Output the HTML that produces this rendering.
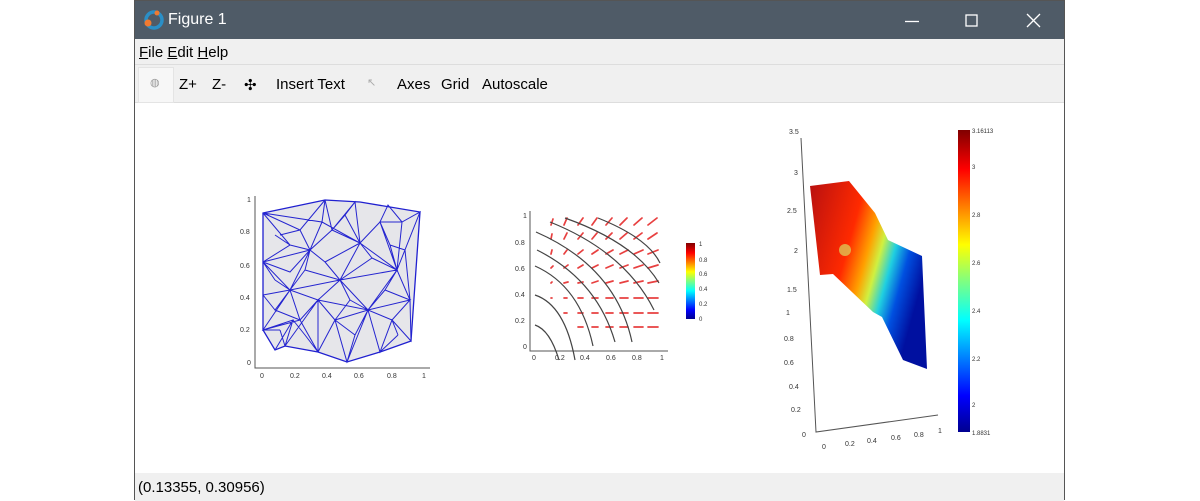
<!DOCTYPE html><html><head><style>
body{margin:0;width:1200px;height:500px;background:#fff;position:relative;overflow:hidden;font-family:"Liberation Sans",sans-serif}
.win{position:absolute;left:134px;top:0;width:931px;height:500px;border:1px solid #555;box-sizing:border-box}
.title{position:absolute;left:0;top:0;width:100%;height:38px;background:#4f5b67;color:#fff;font-size:16px}
.menu{position:absolute;top:38px;left:0;width:100%;height:25px;background:#f0f0f0;font-size:15px;color:#000}
.tool{position:absolute;top:63px;left:0;width:100%;height:39px;background:#f0f0f0;border-top:1px solid #ddd;border-bottom:1px solid #ddd;box-sizing:border-box;font-size:15px}
.status{position:absolute;top:472px;left:0;width:100%;height:28px;background:#f0f0f0;font-size:15px}
span.t{position:absolute;top:11px}
</style></head><body>
<div class="win">
<div class="title">
<svg style="position:absolute;left:8px;top:8px" width="22" height="22"><circle cx="11" cy="11" r="8" fill="none" stroke="#2a8fc7" stroke-width="3.5"/><circle cx="5" cy="14" r="3.5" fill="#f07a30"/><circle cx="14" cy="4" r="2.5" fill="#f07a30"/></svg>
<span style="position:absolute;left:33px;top:10px">Figure 1</span>
<svg style="position:absolute;left:760px;top:10px" width="150" height="20" stroke="#fff" stroke-width="1.3" fill="none"><path d="M10 10.5h14"/><rect x="71" y="4" width="11" height="11"/><path d="M132 3l13 13M145 3l-13 13"/></svg>
</div>
<div class="menu"><span style="position:absolute;left:4px;top:5px"><u>F</u>ile <u>E</u>dit <u>H</u>elp</span></div>
<div class="tool">
<div style="position:absolute;left:3px;top:2px;width:34px;height:34px;background:#f7f7f7;border:1px solid #e4e4e4"></div>
<span class="t" style="left:15px;color:#999;font-size:11px">◍</span>
<span class="t" style="left:44px">Z+</span><span class="t" style="left:77px">Z-</span>
<span class="t" style="left:109px">✣</span>
<span class="t" style="left:141px">Insert Text</span>
<span class="t" style="left:232px;color:#aaa;font-size:11px">↖</span>
<span class="t" style="left:262px">Axes</span><span class="t" style="left:306px">Grid</span><span class="t" style="left:347px">Autoscale</span>
</div>
<div class="status"><span style="position:absolute;left:3px;top:6px">(0.13355, 0.30956)</span></div>
</div>
<svg style="position:absolute;left:0;top:0" width="1200" height="500" font-family="Liberation Sans" font-size="7" fill="#333">
<defs>
<linearGradient id="jet" x1="0" y1="1" x2="0" y2="0"><stop offset="0" stop-color="#00008f"/><stop offset=".12" stop-color="#0000ff"/><stop offset=".37" stop-color="#00ffff"/><stop offset=".5" stop-color="#80ff80"/><stop offset=".62" stop-color="#ffff00"/><stop offset=".87" stop-color="#ff0000"/><stop offset="1" stop-color="#800000"/></linearGradient>
<linearGradient id="surf" x1="0" y1="0" x2="1" y2="0.45"><stop offset="0" stop-color="#b81010"/><stop offset=".4" stop-color="#ff2a00"/><stop offset=".55" stop-color="#ffa000"/><stop offset=".64" stop-color="#d0f040"/><stop offset=".74" stop-color="#20d0e0"/><stop offset=".85" stop-color="#0050e0"/><stop offset="1" stop-color="#0010a0"/></linearGradient>
</defs>
<!-- mesh -->
<g stroke="#555" stroke-width="1"><path d="M255 196V368H430" fill="none"/></g>
<text x="247" y="202">1</text><text x="240" y="234">0.8</text><text x="240" y="268">0.6</text><text x="240" y="300">0.4</text><text x="240" y="332">0.2</text><text x="247" y="365">0</text>
<text x="260" y="378">0</text><text x="290" y="378">0.2</text><text x="322" y="378">0.4</text><text x="354" y="378">0.6</text><text x="387" y="378">0.8</text><text x="422" y="378">1</text>
<polygon points="263,213 325,200 360,202 420,212 411,341 380,352 347,362 318,352 285,346 275,350 263,330" fill="#e6e6ea" stroke="#2020d0" stroke-width="1.3"/>
<g stroke="#2525d0" stroke-width="1" fill="none">
<path d="M263,213 L322,222 L325,200 L332,230 L355,202 L360,243 L380,222 L402,222 L420,212 L397,270 L410,300 L411,341 L392,320 L380,352 L368,310 L347,362 L335,320 L318,352 L318,300 L285,346 L293,320 L263,330 L290,290 L263,262 L290,272 L310,250 L322,222 L360,243 L397,270 L340,280 L290,290 L318,300 L368,310 L397,270 L380,222 L402,222 L397,270 M263,262 L310,250 L332,230 L360,243 L340,280 L318,300 L335,320 L368,310 L392,320 L410,300 L368,310 M263,213 L290,245 L263,262 M290,245 L310,250 L290,290 L300,320 L263,330 M290,290 L275,310 L300,320 L318,300 M340,280 L368,310 M380,222 L360,243 M325,200 L300,230 L263,213 M355,202 L345,215 L332,230 M402,222 L388,205 L380,222 M275,310 L263,295 M300,320 L318,352 M335,320 L347,362 M392,320 L411,341 M397,270 L420,212 M410,300 L405,250 M275,350 L293,320 M263,295 L290,290
M280,235 L300,230 L310,250 M345,215 L360,243 M372,258 L397,270 M372,258 L360,243 M372,258 L340,280 M350,300 L340,280 M350,300 L368,310 M350,300 L335,320 M385,290 L397,270 M385,290 L368,310 M385,290 L410,300 M275,280 L263,262 M275,280 L290,290 M305,270 L290,290 M305,270 L340,280 M305,270 L310,250 M325,262 L340,280 M325,262 L310,250 M325,262 L360,243 M355,335 L368,310 M355,335 L347,362 M355,335 L335,320 M398,335 L392,320 M398,335 L380,352 M305,335 L318,352 M305,335 L293,320 M280,330 L263,330 M280,330 L285,346 M390,245 L380,222 M390,245 L397,270 M390,245 L405,250 M275,235 L290,245"/>
</g>
<!-- quiver -->
<path d="M530 211V351H668" stroke="#555" fill="none"/>
<text x="523" y="218">1</text><text x="515" y="245">0.8</text><text x="515" y="271">0.6</text><text x="515" y="297">0.4</text><text x="515" y="323">0.2</text><text x="523" y="349">0</text>
<text x="532" y="360">0</text><text x="555" y="360">0.2</text><text x="580" y="360">0.4</text><text x="606" y="360">0.6</text><text x="632" y="360">0.8</text><text x="660" y="360">1</text>
<g stroke="#e84040" stroke-width="1.7" stroke-linecap="round">
<path d="M551 225l2-6M564 225l3-7M578 225l5-7M592 225l5-7M606 225l6-7M620 225l7-7M634 225l8-7M648 225l9-7
M551 239l1-5M564 239l3-6M578 239l5-6M592 239l5-6M606 239l6-6M620 239l7-6M634 239l8-6M648 239l9-6
M551 254l1-4M564 254l3-4M578 254l5-4M592 254l6-4M606 254l7-4M620 254l8-4M634 254l9-4M648 254l10-4
M551 268l2-2M564 268l4-3M578 268l5-3M592 268l6-3M606 268l7-3M620 268l8-3M634 268l9-3M648 268l10-3
M551 283l1-1M564 283l4-1M578 283l5-1M592 283l6-2M606 283l7-2M620 283l8-2M634 283l9-2M648 283l10-2
M551 298h1M564 298h3M578 298h5M592 298h6M606 298h7M620 298h8M634 298h9M648 298h10
M564 313h3M578 313h5M592 313h6M606 313h7M620 313h8M634 313h9M648 313h10
M578 327h5M592 327h6M606 327h7M620 327h8M634 327h9M648 327h10"/></g>
<g stroke="#444" stroke-width="1.2" fill="none">
<path d="M535 325q15 5 24 35"/><path d="M535 295q30 10 40 65"/><path d="M535 266q45 20 58 80"/><path d="M537 250q60 30 78 92"/><path d="M536 232q80 35 96 110"/><path d="M550 222q75 30 104 88"/><path d="M565 218q70 25 94 65"/><path d="M598 218q50 20 62 45"/>
</g>
<rect x="686" y="243" width="9" height="76" fill="url(#jet)"/>
<text x="699" y="246" font-size="6">1</text><text x="699" y="262" font-size="6">0.8</text><text x="699" y="276" font-size="6">0.6</text><text x="699" y="291" font-size="6">0.4</text><text x="699" y="306" font-size="6">0.2</text><text x="699" y="321" font-size="6">0</text>
<!-- 3d -->
<path d="M801 138L816 432L938 415" stroke="#555" fill="none"/>
<text x="789" y="134">3.5</text><text x="794" y="175">3</text><text x="787" y="213">2.5</text><text x="794" y="253">2</text><text x="787" y="292">1.5</text><text x="786" y="315">1</text><text x="784" y="341">0.8</text><text x="784" y="365">0.6</text><text x="789" y="389">0.4</text><text x="791" y="412">0.2</text><text x="802" y="437">0</text>
<text x="822" y="449">0</text><text x="845" y="446">0.2</text><text x="867" y="443">0.4</text><text x="891" y="440">0.6</text><text x="914" y="437">0.8</text><text x="938" y="433">1</text>
<polygon points="810,186 849,181 875,213 888,240 922,256 927,369 903,360 882,317 873,312 833,274 820,275" fill="url(#surf)"/>
<circle cx="845" cy="250" r="6" fill="#d8d860" opacity=".7"/>
<rect x="958" y="130" width="12" height="302" fill="url(#jet)"/>
<g font-size="6"><text x="972" y="133">3.16113</text><text x="972" y="169">3</text><text x="972" y="217">2.8</text><text x="972" y="265">2.6</text><text x="972" y="313">2.4</text><text x="972" y="361">2.2</text><text x="972" y="407">2</text><text x="972" y="435">1.8831</text></g>
</svg>
</body></html>
